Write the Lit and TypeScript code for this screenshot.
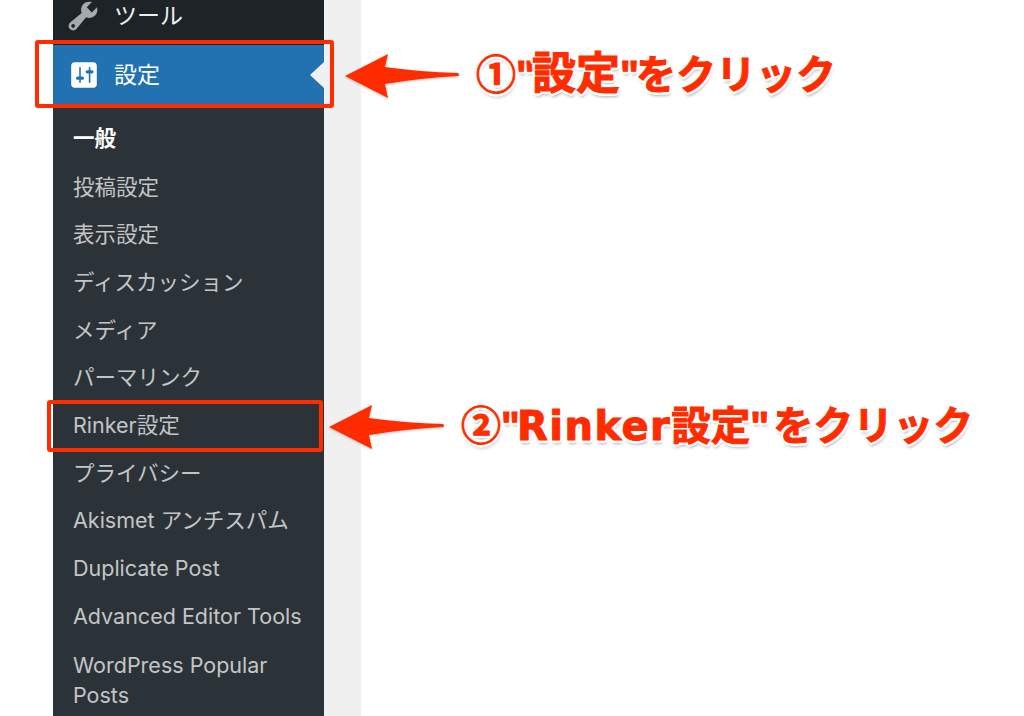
import { LitElement, html, css } from "lit";
import { customElement } from "lit/decorators.js";

const items = ["投稿設定", "表示設定", "ディスカッション", "メディア", "パーマリンク", "Rinker設定", "プライバシー", "Akismet アンチスパム", "Duplicate Post", "Advanced Editor Tools"];

@customElement("app-root")
export class AppRoot extends LitElement {
  static styles = css`
    :host { display: block; position: relative; width: 1024px; height: 716px; overflow: hidden; background: #fff;
      font-family: Inter, "Noto Sans CJK JP", sans-serif; }
    .page { display: flex; height: 716px; }
    .gutter { width: 53px; background: #fff; }
    .sidebar { width: 271px; background: #2c3338; display: flex; flex-direction: column; overflow: hidden; }
    .gray { width: 37px; background: #f0f0f1; }
    .rest { flex: 1; background: #fff; }
    .top { height: 45px; flex: none; background: #1d2327; display: flex; align-items: center; padding: 0 0 15px 12px; box-sizing: border-box; color: #eceeef; font-size: 23px; }
    .top span { margin-bottom: 3px; margin-left: -1px; }
    .cur { height: 60px; flex: none; background: #2271b1; display: flex; align-items: center; padding-left: 12px; color: #fff; font-size: 23px; position: relative; }
    .cur span { margin-bottom: 4px; margin-left: -1px; }
    .cur::after { content: ""; position: absolute; right: 0; top: 17px; border: 13px solid transparent; border-left-width: 0; border-right: 14px solid #f0f0f1; }
    .ic { width: 36px; height: 36px; flex: none; margin-right: 14px; display: block; }
    .top .ic { fill: #a7aaad; margin-top: 2px; margin-right: 14px; }
    .cur .ic { fill: #fff; width: 32px; height: 32px; margin: -1px 15px 0 3px; }
    .sub { padding-top: 9px; display: flex; flex-direction: column; font-size: 21.5px; line-height: 30px; color: #c3c5c7; }
    .it { height: 47.7px; display: flex; align-items: center; padding-left: 20px; white-space: nowrap; }
    .it.on { color: #fff; font-weight: 700; height: 48.7px; }
    .it.two { height: auto; white-space: normal; padding: 10px 40px 0 20px; }
    .box { position: absolute; border: 4.5px solid #ff2c00; border-radius: 3px; box-sizing: border-box; }
    .b1 { left: 35px; top: 40px; width: 299px; height: 68px; }
    .b2 { left: 47px; top: 400px; width: 275.5px; height: 52px; }
    .arrow { position: absolute; left: 0; top: 0; width: 1024px; height: 716px; filter: drop-shadow(0 1px 1px rgba(0,0,0,.25)); }
    .arrow path { fill: #ff2c00; }
    .note { position: absolute; font-family: "Liberation Sans", "Noto Sans CJK JP", sans-serif; font-weight: 700; font-size: 40px; line-height: 50px; color: #ff2c00; white-space: nowrap;
      -webkit-text-stroke: 1px #ff2c00;
      text-shadow: 3px 0 0 #fff, -3px 0 0 #fff, 0 3px 0 #fff, 0 -3px 0 #fff, 2px 2px 0 #fff, -2px 2px 0 #fff, 2px -2px 0 #fff, -2px -2px 0 #fff, 1px 4px 3px rgba(0,0,0,.3); }
    .n1 { left: 476px; top: 49px; }
    .n2 { left: 461px; top: 401px; }
    .kanji { font-size: 44px; }
    .q { letter-spacing: -3px; }
    .qe { margin-right: 4px; }
    .latin { font-family: "DejaVu Sans", sans-serif; letter-spacing: 1.5px; }
    .kanji2 { font-size: 39.5px; }
  `;

  render() {
    return html`
      <div class="page">
        <div class="gutter"></div>
        <div class="sidebar">
          <div class="top">
            <svg class="ic" viewBox="0 0 20 20"><path d="M16.68 9.77c-1.34 1.34-3.3 1.67-4.95.99l-5.41 6.52c-.99.99-2.59.99-3.58 0s-.99-2.59 0-3.58l6.52-5.41c-.68-1.65-.35-3.61.99-4.95 1.28-1.28 3.12-1.62 4.72-1.06l-2.89 2.89 2.82 2.82 2.86-2.87c.53 1.58.18 3.39-1.08 4.65zM3.81 16.21c.4.39 1.04.39 1.43 0 .4-.4.4-1.04 0-1.43-.39-.4-1.03-.4-1.43 0-.39.39-.39 1.03 0 1.43z"/></svg>
            <span>ツール</span>
          </div>
          <div class="cur">
            <svg class="ic" viewBox="0 0 20 20"><path d="M18 16V4c0-1.1-.9-2-2-2H4c-1.1 0-2 .9-2 2v12c0 1.1.9 2 2 2h12c1.1 0 2-.9 2-2zM8 11h1c.55 0 1 .45 1 1s-.45 1-1 1H8v1.5c0 .28-.22.5-.5.5s-.5-.22-.5-.5V13H6c-.55 0-1-.45-1-1s.45-1 1-1h1V5.5c0-.28.22-.5.5-.5s.5.22.5.5V11zm5-2h-1c-.55 0-1-.45-1-1s.45-1 1-1h1V5.5c0-.28.22-.5.5-.5s.5.22.5.5V7h1c.55 0 1 .45 1 1s-.45 1-1 1h-1v5.5c0 .28-.22.5-.5.5s-.5-.22-.5-.5V9z"/></svg>
            <span>設定</span>
          </div>
          <div class="sub">
            <div class="it on">一般</div>
            ${items.map((t) => html`<div class="it">${t}</div>`)}
            <div class="it two">WordPress Popular Posts</div>
          </div>
        </div>
        <div class="gray"></div>
        <div class="rest"></div>
      </div>
      <div class="box b1"></div>
      <div class="box b2"></div>
      <svg class="arrow" viewBox="0 0 1024 716">
        <path d="M345 76 L388 54 L385 67 Q420 72 458 73 Q460 75 458 76 Q420 78 385 84 L388 98 Z"/>
        <path d="M329 427 L372 405 L369 418 Q405 423 443 424 Q445 426 443 427 Q405 429 369 435 L372 449 Z"/>
      </svg>
      <div class="note n1">①<span class="q">"</span><span class="kanji">設定</span><span class="q">"</span>をクリック</div>
      <div class="note n2">②<span class="q">"</span><span class="latin">Rinker</span><span class="kanji2">設定</span><span class="qe">"</span>をクリック</div>
    `;
  }
}
